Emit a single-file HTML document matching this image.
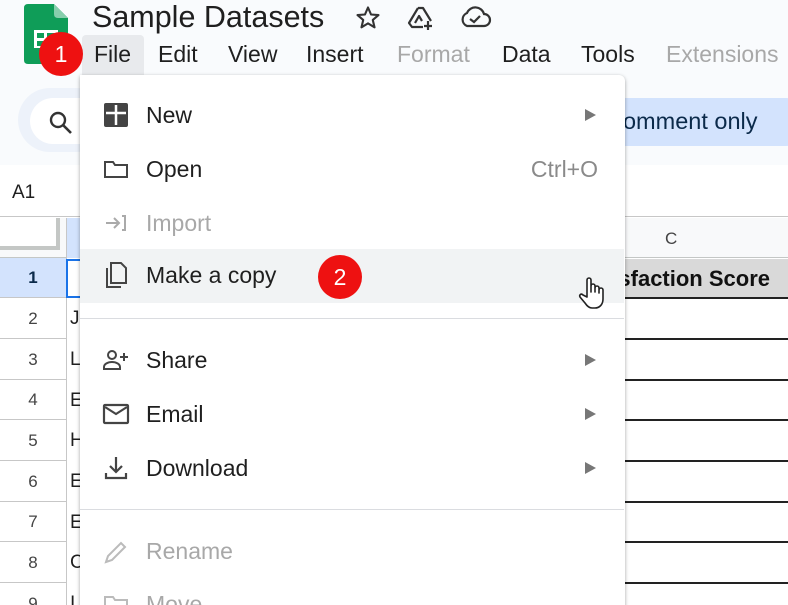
<!DOCTYPE html>
<html><head><style>
*{margin:0;padding:0;box-sizing:border-box}
html,body{width:788px;height:605px;overflow:hidden}
body{background:#fff;font-family:"Liberation Sans",Arial,sans-serif;position:relative;color:#1f1f1f}
.abs{position:absolute}
.menu-t{position:absolute;font-size:23px;top:41px;color:#1f1f1f}
.item{position:absolute;left:80px;width:544px;height:54px}
.item .lb{position:absolute;left:66px;top:14px;font-size:23px;color:#1f1f1f}
.item .ic{position:absolute;left:22px;top:14px;width:28px;height:26px}
.dis .lb{color:#a8a8a8}
.arr{position:absolute;left:505px;top:21px;width:0;height:0;border-left:11px solid #777;border-top:6px solid transparent;border-bottom:6px solid transparent}
.rowh{position:absolute;left:0;width:66px;text-align:center;font-size:17px;color:#444;border-bottom:1px solid #c7c7c7}
.hl{position:absolute;left:624px;width:164px;height:2px;background:#222}
</style></head><body>
<div class="abs" style="left:0;top:0;width:788px;height:165px;background:#f9fbfd"></div>
<svg class="abs" style="left:24px;top:4px" width="46" height="60" viewBox="0 0 46 60">
<path d="M4 0H30L44 14V56Q44 60 40 60H4Q0 60 0 56V4Q0 0 4 0Z" fill="#0f9d58"/>
<path d="M30 0L44 14H34Q30 14 30 10Z" fill="#87ceac"/>
<rect x="10" y="26" width="24" height="18" fill="#fff"/>
<rect x="13" y="29" width="7" height="5" fill="#0f9d58"/><rect x="23" y="29" width="8" height="5" fill="#0f9d58"/>
<rect x="13" y="37" width="7" height="5" fill="#0f9d58"/><rect x="23" y="37" width="8" height="5" fill="#0f9d58"/>
</svg>
<div class="abs" style="left:92px;top:0px;font-size:30.5px;color:#1f1f1f">Sample Datasets</div>
<svg class="abs" style="left:354px;top:4px" width="28" height="28" viewBox="0 0 24 24"><path d="M12 3l2.6 6 6.4.5-4.9 4.2 1.5 6.3L12 16.6 6.4 20l1.5-6.3L3 9.5l6.4-.5z" fill="none" stroke="#333" stroke-width="1.8" stroke-linejoin="round"/></svg>
<svg class="abs" style="left:406px;top:4px" width="30" height="28" viewBox="0 0 30 28"><path d="M12 4L3 19l3 4h11M12 4h5l8 13M9 19l4-7 3 5" fill="none" stroke="#333" stroke-width="2.2" stroke-linejoin="round"/><path d="M22 17v9M18 22h8" stroke="#333" stroke-width="2.2"/></svg>
<svg class="abs" style="left:458px;top:6px" width="34" height="22" viewBox="0 0 34 22"><path d="M9 20h17a6 6 0 0 0 0-12 9 9 0 0 0-17-1 7 7 0 0 0 0 13z" fill="none" stroke="#333" stroke-width="2.2"/><path d="M12 13l4 3 6-6" fill="none" stroke="#333" stroke-width="2.2"/></svg>
<div class="abs" style="left:82px;top:35px;width:62px;height:40px;background:#e8eaed;border-radius:4px 4px 0 0"></div>
<div class="menu-t" style="left:94px">File</div>
<div class="menu-t" style="left:158px">Edit</div>
<div class="menu-t" style="left:228px">View</div>
<div class="menu-t" style="left:306px">Insert</div>
<div class="menu-t" style="left:397px;color:#a8a8a8">Format</div>
<div class="menu-t" style="left:502px">Data</div>
<div class="menu-t" style="left:581px">Tools</div>
<div class="menu-t" style="left:666px;color:#a8a8a8">Extensions</div>
<div class="abs" style="left:39px;top:32px;width:44px;height:44px;border-radius:50%;background:#ee1111;color:#fff;font-size:23px;text-align:center;line-height:44px">1</div>
<div class="abs" style="left:18px;top:88px;width:90px;height:64px;border-radius:32px;background:#edf2fa"></div>
<div class="abs" style="left:30px;top:98px;width:90px;height:46px;border-radius:23px;background:#fff"></div>
<svg class="abs" style="left:48px;top:110px" width="26" height="26" viewBox="0 0 26 26"><circle cx="10" cy="10" r="7" fill="none" stroke="#333" stroke-width="2.4"/><path d="M15 15l8 8" stroke="#333" stroke-width="2.6"/></svg>
<div class="abs" style="left:560px;top:98px;width:250px;height:48px;border-radius:24px;background:#d3e3fd"></div>
<div class="abs" style="left:606px;top:108px;font-size:23.5px;color:#0b2a4a">Comment only</div>
<div class="abs" style="left:0;top:165px;width:788px;height:52px;background:#fff;border-bottom:1px solid #c7c7c7"></div>
<div class="abs" style="left:12px;top:182px;font-size:19px">A1</div>
<div class="abs" style="left:0;top:218px;width:788px;height:40px;background:#f8f9fa;border-bottom:1px solid #c4c7c5"></div>
<div class="abs" style="left:0;top:218px;width:60px;height:32px;background:#fff;border-right:4px solid #c4c7c5;border-bottom:4px solid #c4c7c5"></div>
<div class="abs" style="left:67px;top:218px;width:20px;height:40px;background:#d3e3fd"></div>
<div class="abs" style="left:665px;top:229px;font-size:17px;color:#444">C</div>
<div class="abs" style="left:0;top:258px;width:66px;height:40px;background:#d3e3fd"></div>
<div class="rowh" style="top:258px;height:40px;line-height:40px;font-weight:bold;color:#0b2a4a">1</div>
<div class="rowh" style="top:298px;height:41px;line-height:41px">2</div>
<div class="rowh" style="top:339px;height:41px;line-height:41px">3</div>
<div class="rowh" style="top:380px;height:40px;line-height:40px">4</div>
<div class="rowh" style="top:420px;height:41px;line-height:41px">5</div>
<div class="rowh" style="top:461px;height:41px;line-height:41px">6</div>
<div class="rowh" style="top:502px;height:40px;line-height:40px">7</div>
<div class="rowh" style="top:542px;height:41px;line-height:41px">8</div>
<div class="rowh" style="top:583px;height:30px;line-height:41px">9</div>
<div class="abs" style="left:66px;top:218px;width:1px;height:400px;background:#c7c7c7"></div>
<div class="abs" style="left:66px;top:259px;width:20px;height:39px;border:2px solid #1a73e8"></div>
<div class="abs" style="left:70px;top:308px;font-size:19px">J</div>
<div class="abs" style="left:70px;top:349px;font-size:19px">L</div>
<div class="abs" style="left:70px;top:390px;font-size:19px">E</div>
<div class="abs" style="left:70px;top:430px;font-size:19px">H</div>
<div class="abs" style="left:70px;top:471px;font-size:19px">E</div>
<div class="abs" style="left:70px;top:512px;font-size:19px">E</div>
<div class="abs" style="left:70px;top:552px;font-size:19px">C</div>
<div class="abs" style="left:70px;top:593px;font-size:19px">I</div>
<div class="abs" style="left:624px;top:259px;width:164px;height:39px;background:#d9d9d9"></div>
<div class="abs" style="right:18px;top:266px;font-size:22px;font-weight:bold;color:#111;white-space:nowrap">Satisfaction Score</div>
<div class="hl" style="top:297px"></div><div class="hl" style="top:338px"></div><div class="hl" style="top:379px"></div><div class="hl" style="top:419px"></div><div class="hl" style="top:460px"></div><div class="hl" style="top:501px"></div><div class="hl" style="top:541px"></div><div class="hl" style="top:582px"></div>
<div class="abs" style="left:80px;top:75px;width:545px;height:540px;background:#fff;border-radius:0 6px 0 0;box-shadow:0 1px 3px rgba(0,0,0,.25),0 2px 6px rgba(0,0,0,.12)"></div>
<div class="item" style="top:88px">
 <svg class="ic" viewBox="0 0 28 26"><rect x="2" y="1" width="24" height="24" rx="2" fill="#444"/><path d="M14 3v20M4 11h20" stroke="#fff" stroke-width="2.5"/></svg>
 <div class="lb">New</div><div class="arr"></div></div>
<div class="item" style="top:142px">
 <svg class="ic" viewBox="0 0 28 26"><path d="M3 6h8l2 3h12v12H3z" fill="none" stroke="#444" stroke-width="2"/></svg>
 <div class="lb">Open</div><div class="abs" style="right:26px;top:14px;font-size:23px;color:#8a8a8a">Ctrl+O</div></div>
<div class="item dis" style="top:196px">
 <svg class="ic" viewBox="0 0 28 26"><path d="M4 13h12M12 8l5 5-5 5M20 6h3v14h-3" fill="none" stroke="#aaa" stroke-width="2"/></svg>
 <div class="lb">Import</div></div>
<div class="item" style="top:249px;height:54px;background:#f1f3f4">
 <svg class="ic" style="top:13px" viewBox="0 0 28 26"><path d="M9 1h10l5 5v15H9z" fill="none" stroke="#444" stroke-width="2"/><path d="M5 6v19h14" fill="none" stroke="#444" stroke-width="2"/></svg>
 <div class="lb" style="top:13px">Make a copy</div>
 <div class="abs" style="left:238px;top:6px;width:44px;height:44px;border-radius:50%;background:#ee1111;color:#fff;font-size:23px;text-align:center;line-height:44px">2</div>
 <svg class="abs" style="left:498px;top:26px" width="30" height="36" viewBox="0 0 30 36"><path d="M9 22V5a2 2 0 0 1 4 0v12V11a2 2 0 0 1 4 0v6-4a2 2 0 0 1 4 0v5-3a2 2 0 0 1 4 0v9c0 6-4 9-8 9h-3c-3 0-5-2-7-5l-5-6c-1-2 1-4 3-2z" fill="#fff" stroke="#222" stroke-width="1.6" stroke-linejoin="round"/></svg>
</div>
<div class="abs" style="left:80px;top:318px;width:544px;height:1px;background:#dadce0"></div>
<div class="item" style="top:333px">
 <svg class="ic" viewBox="0 0 28 26"><circle cx="10" cy="8" r="4" fill="none" stroke="#444" stroke-width="2"/><path d="M2 22v-2c0-3 4-5 8-5s8 2 8 5v2z" fill="none" stroke="#444" stroke-width="2"/><path d="M22 6v8M18 10h8" stroke="#444" stroke-width="2"/></svg>
 <div class="lb">Share</div><div class="arr"></div></div>
<div class="item" style="top:387px">
 <svg class="ic" viewBox="0 0 28 26"><rect x="2" y="4" width="24" height="18" rx="1" fill="none" stroke="#444" stroke-width="2.2"/><path d="M3 6l11 7 11-7" fill="none" stroke="#444" stroke-width="2.2"/></svg>
 <div class="lb">Email</div><div class="arr"></div></div>
<div class="item" style="top:441px">
 <svg class="ic" viewBox="0 0 28 26"><path d="M14 2v15M8 11l6 6 6-6M4 18v5h20v-5" fill="none" stroke="#444" stroke-width="2.2"/></svg>
 <div class="lb">Download</div><div class="arr"></div></div>
<div class="abs" style="left:80px;top:509px;width:544px;height:1px;background:#dadce0"></div>
<div class="item dis" style="top:524px">
 <svg class="ic" viewBox="0 0 28 26"><path d="M4 24l2-6L19 5l4 4L10 22z" fill="none" stroke="#bbb" stroke-width="2"/></svg>
 <div class="lb">Rename</div></div>
<div class="item dis" style="top:577px">
 <svg class="ic" viewBox="0 0 28 26"><path d="M3 6h8l2 3h12v12H3z" fill="none" stroke="#bbb" stroke-width="2"/></svg>
 <div class="lb">Move</div></div>
</body></html>
